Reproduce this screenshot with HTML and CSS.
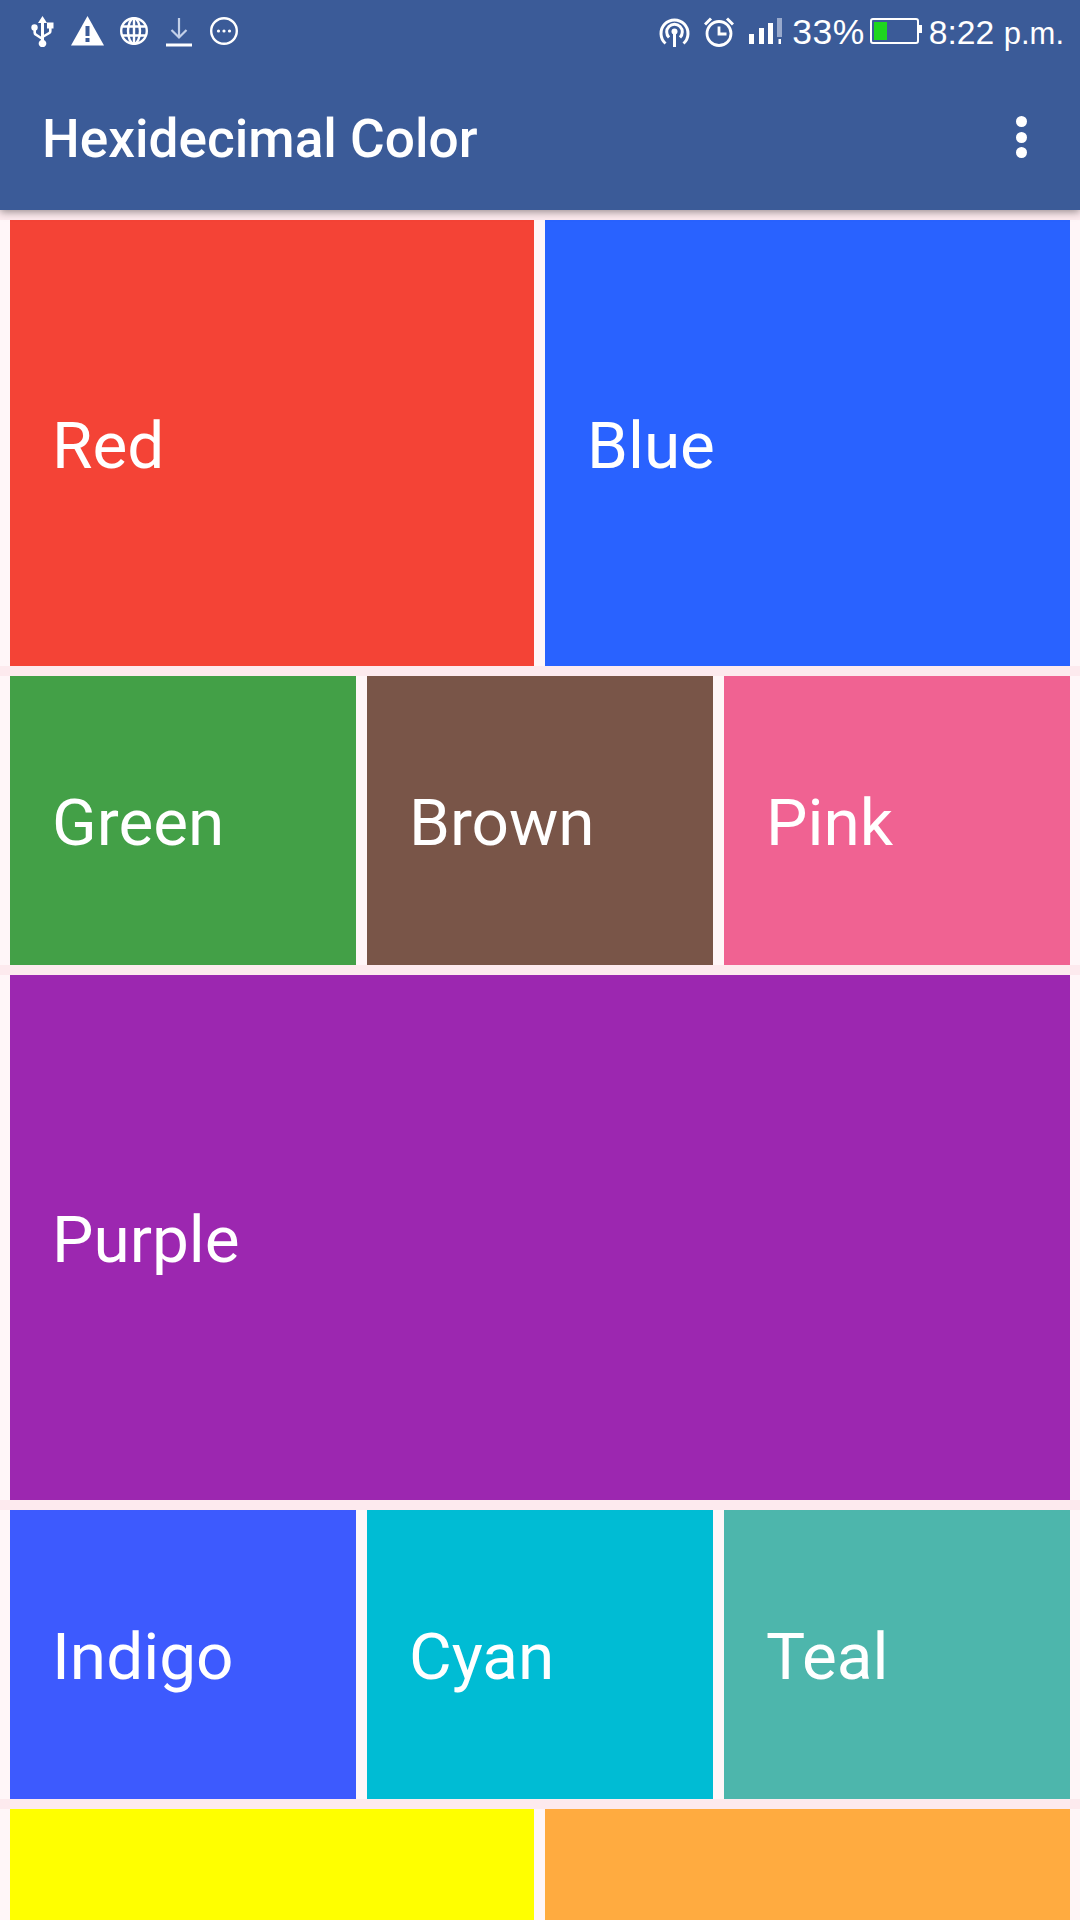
FILE: index.html
```html
<!DOCTYPE html>
<html lang="en">
<head>
<meta charset="utf-8">
<title>Hexidecimal Color</title>
<link rel="stylesheet" href="styles.css">
</head>
<body>
<header class="header">
  <div class="status">
    <div class="status-group status-left">
      <svg class="ic ic-usb" viewBox="0 0 25 31"><path d="M12.500 0l-4.500 7h3v17a3.800 3.800 0 1 0 3 0V7h3z" fill="#fff"/><path d="M12.500 23l-6.800-4.500a2 2 0 0 1-1-1.700V13M12.500 21l6.800-4a2 2 0 0 0 1-1.700V11" fill="none" stroke="#fff" stroke-width="2.600"/><circle cx="4.500" cy="11.500" r="3.200" fill="#fff"/><rect x="17" y="6.500" width="6.500" height="6" fill="#fff"/></svg>
      <svg class="ic ic-warn" viewBox="0 0 33 30"><path d="M16.500 0L33 29.500H0z" fill="#fff"/><rect x="14.500" y="10" width="4" height="10" fill="#3b5b98"/><rect x="14.500" y="22" width="4" height="4" fill="#3b5b98"/></svg>
      <svg class="ic ic-globe" viewBox="0 0 28 28"><g fill="none" stroke="#fff" stroke-width="2.400"><circle cx="14" cy="14" r="12.800"/><ellipse cx="14" cy="14" rx="6" ry="12.800"/><path d="M14 1v26M2.500 9.500h23M2.500 18.500h23"/></g></svg>
      <svg class="ic ic-down" viewBox="0 0 30 30"><path d="M15 1v19M7.500 13l7.500 7.500 7.500-7.500" fill="none" stroke="#c3d0e8" stroke-width="2.200"/><rect x="2" y="26.500" width="26" height="3" fill="#fff"/></svg>
      <svg class="ic ic-more" viewBox="0 0 28 28"><circle cx="14" cy="14" r="12.800" fill="none" stroke="#fff" stroke-width="2.400"/><circle cx="8.500" cy="14" r="1.600" fill="#fff"/><circle cx="14" cy="14" r="1.600" fill="#fff"/><circle cx="19.500" cy="14" r="1.600" fill="#fff"/></svg>
    </div>
    <div class="status-group status-right">
      <svg class="ic ic-hot" viewBox="0 0 31 29"><g fill="none" stroke="#fff" stroke-width="3"><path d="M6.500 25.500a13.500 13.500 0 1 1 18 0"/><path d="M10 19.500a7.800 7.800 0 1 1 11 0"/></g><circle cx="15.500" cy="13.500" r="3" fill="#fff"/><rect x="14" y="13.500" width="3" height="15.500" fill="#fff"/></svg>
      <svg class="ic ic-alarm" viewBox="0 0 30 30"><g fill="none" stroke="#fff" stroke-width="2.800"><circle cx="15" cy="16.500" r="12"/><path d="M15 9.500v7.500h7.500"/></g><path d="M1 7.500L7 1.500M29 7.500L23 1.500" stroke="#fff" stroke-width="3"/></svg>
      <svg class="ic ic-signal" viewBox="0 0 34 27"><rect x="0" y="16" width="5" height="10" fill="#fff"/><rect x="10" y="10" width="5" height="16" fill="#fff"/><rect x="19" y="5" width="5" height="21" fill="#fff"/><rect x="28" y="0" width="5" height="19" fill="#98a9cc"/><rect x="29.500" y="21" width="2.500" height="5" fill="#fff"/></svg>
      <span class="pct">33%</span>
      <div class="battery"><div class="battery-fill"></div></div>
      <span class="clock">8:22 <small class="ampm">p.m.</small></span>
    </div>
  </div>
  <div class="appbar">
    <h1 class="title">Hexidecimal Color</h1>
    <div class="overflow"><i class="dot"></i><i class="dot"></i><i class="dot"></i></div>
  </div>
</header>
<main class="grid">
  <section class="row row-tall">
    <div class="tile red">Red</div>
    <div class="tile blue">Blue</div>
  </section>
  <section class="row row-short">
    <div class="tile green">Green</div>
    <div class="tile brown">Brown</div>
    <div class="tile pink">Pink</div>
  </section>
  <section class="row row-full">
    <div class="tile purple">Purple</div>
  </section>
  <section class="row row-short">
    <div class="tile indigo">Indigo</div>
    <div class="tile cyan">Cyan</div>
    <div class="tile teal">Teal</div>
  </section>
  <section class="row row-tall row-cut">
    <div class="tile yellow"></div>
    <div class="tile orange"></div>
  </section>
</main>
</body>
</html>
```
FILE: styles.css
```css
html, body { margin: 0; padding: 0; }
html { height: 1920px; overflow: hidden; }
body {
  width: 1080px;
  height: 1920px;
  overflow: hidden;
  background: #fdeaee;
  font-family: Roboto, "Liberation Sans", sans-serif;
  color: #fff;
}
.header {
  position: relative;
  z-index: 1;
  height: 210px;
  background: #3b5b98;
  box-shadow: 0 2px 8px rgba(0, 0, 0, 0.4);
}
.status {
  height: 60px;
  padding: 0 16px 0 30px;
  display: flex;
  justify-content: space-between;
  align-items: flex-start;
}
.status-group { display: flex; align-items: flex-start; }
.status-left { gap: 16px; padding-top: 16px; }
.status-right { padding-top: 16px; }
.ic { display: block; flex: none; }
.ic-usb { width: 25px; height: 31px; }
.ic-warn { width: 33px; height: 30px; }
.ic-globe { width: 28px; height: 28px; margin-top: 1px; }
.ic-down { width: 30px; height: 30px; margin-top: 1px; }
.ic-more { width: 28px; height: 28px; margin-top: 1px; }
.ic-hot { width: 31px; height: 29px; margin-top: 2px; }
.ic-alarm { width: 30px; height: 30px; margin: 1px 0 0 14px; }
.ic-signal { width: 34px; height: 27px; margin: 2px 0 0 15px; }
.pct, .clock {
  font-family: "Liberation Sans", Arial, sans-serif;
  line-height: 30px;
  margin-top: 1px;
}
.pct { margin-left: 9px; font-size: 35.500px; letter-spacing: 0.500px; }
.clock { margin-left: 0; white-space: nowrap; font-size: 33.700px; }
.ampm { font-size: 31px; }
.battery {
  position: relative;
  width: 41px;
  height: 18px;
  margin: 2px 10px 0 5px;
  border: 2px solid #fff;
  border-radius: 3px;
  padding: 2px;
}
.battery::after {
  content: "";
  position: absolute;
  right: -5.500px;
  top: 5px;
  width: 3px;
  height: 8px;
  background: #fff;
}
.battery-fill { width: 13px; height: 100%; background: #1ed61e; }
.appbar {
  height: 146px;
  padding: 4px 44px 0 42px;
  display: flex;
  justify-content: space-between;
  align-items: center;
}
.title {
  margin: 4px 0 0;
  font-size: 53.200px;
  font-weight: 500;
  line-height: 1.100;
}
.overflow { display: flex; flex-direction: column; gap: 4.500px; margin-right: 9px; }
.dot { display: block; width: 11px; height: 11px; border-radius: 50%; background: #fff; }
.grid {
  display: flex;
  flex-direction: column;
  gap: 10px;
  padding-top: 10px;
}
.row {
  display: flex;
  gap: 11px;
  padding: 0 10px;
  background: #fff6f8;
  flex: none;
}
.row-tall { height: 446px; }
.row-short { height: 289px; }
.row-full { height: 525px; }
.row-cut { height: 111px; overflow: hidden; }
.row-tall .tile:first-child { flex: 0 0 524px; }
.tile {
  box-sizing: border-box;
  flex: 1 1 0;
  display: flex;
  align-items: center;
  padding: 5px 0 0 42px;
  font-size: 65.700px;
  line-height: 1;
}
.red { background: #f44336; }
.blue { background: #2962ff; }
.green { background: #43a047; }
.brown { background: #795548; }
.pink { background: #f06292; }
.purple { background: #9c27b0; }
.indigo { background: #3d5afe; }
.cyan { background: #00bcd4; }
.teal { background: #4db6ac; }
.yellow { background: #ffff00; }
.orange { background: #ffab40; }
```
